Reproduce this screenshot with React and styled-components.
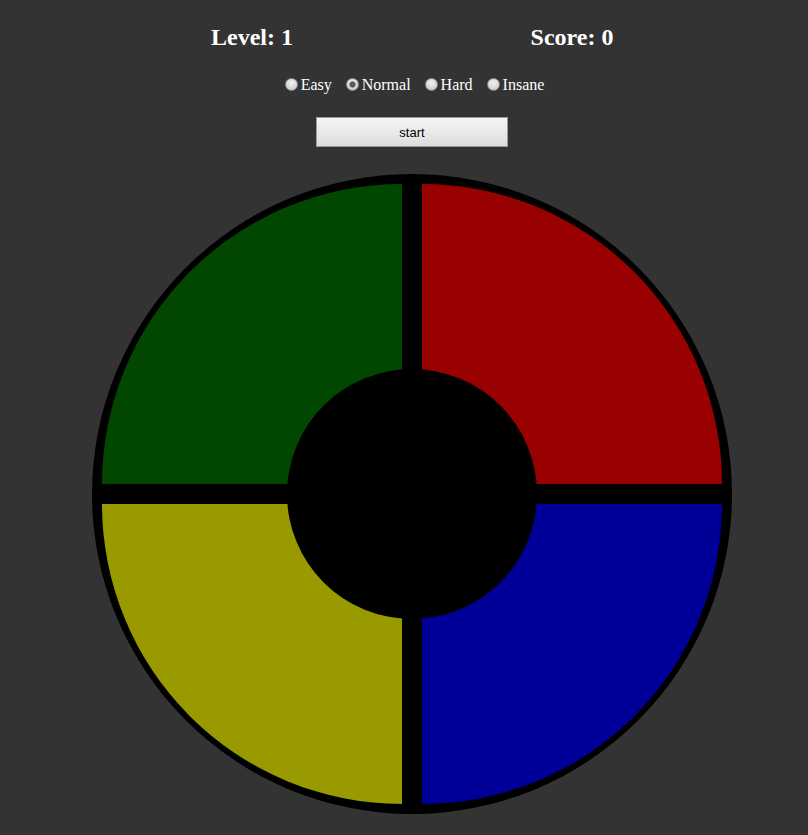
import React, { useState } from 'react'
import styled, { createGlobalStyle } from 'styled-components'

const GlobalStyle = createGlobalStyle`
    html, body {
        margin: 0;
        background: #333333;
    }
    body {
        padding: 0 0 0 16px;
        font-family: "Liberation Serif", "Times New Roman", serif;
        color: #ffffff;
    }
`

const levels = ['Easy', 'Normal', 'Hard', 'Insane']

function App() {
    const [level, setLevel] = useState('Normal')

    return (
        <>
            <GlobalStyle />
            <GameStyled>
                <div className="scores">
                    <h2>Level: 1</h2>
                    <h2>Score: 0</h2>
                </div>
                <div className="levels">
                    {levels.map(name => (
                        <label key={name}>
                            <input
                                type="radio"
                                name="level"
                                checked={level === name}
                                onChange={() => setLevel(name)}
                            />
                            {name}
                        </label>
                    ))}
                </div>
                <StartButton>start</StartButton>
                <Board>
                    <Pad $color="#024700" $corner="top-left" />
                    <Pad $color="#990000" $corner="top-right" />
                    <Pad $color="#999900" $corner="bottom-left" />
                    <Pad $color="#000099" $corner="bottom-right" />
                    <Hub />
                </Board>
            </GameStyled>
        </>
    )
}

const GameStyled = styled.div`
    width: 640px;
    margin: 0 auto;
    padding-top: 23px;
    display: flex;
    flex-direction: column;
    align-items: center;
    .scores{
        width: 100%;
        display: grid;
        grid-template-columns: 1fr 1fr;
        h2{
            margin: 0;
            font-size: 24px;
            line-height: 28px;
            font-weight: 700;
            text-align: center;
        }
    }
    .levels{
        margin-top: 24px;
        display: flex;
        justify-content: center;
        gap: 14px;
        font-size: 16px;
        line-height: 20px;
        padding-left: 5px;
        label{
            display: flex;
            align-items: center;
            gap: 3px;
        }
        input{
            appearance: none;
            box-sizing: border-box;
            margin: 0;
            width: 13px;
            height: 13px;
            border-radius: 50%;
            border: 1px solid #8e8e8e;
            background: radial-gradient(circle at 50% 35%, #f2f2f2 0%, #d6d6d6 60%, #bdbdbd 100%);
            position: relative;
            top: -1px;
        }
        input:checked{
            background:
                radial-gradient(circle, #5a5a5a 0 2.5px, #8a8a8a 3px, transparent 3.5px),
                radial-gradient(circle at 50% 35%, #f2f2f2 0%, #d6d6d6 60%, #bdbdbd 100%);
        }
    }
`

const StartButton = styled.button`
    margin-top: 22px;
    width: 192px;
    height: 30px;
    border: 1px solid #9a9a9a;
    border-radius: 0;
    background: linear-gradient(#f6f6f6, #dddddd);
    font-family: "Liberation Sans", Arial, sans-serif;
    font-size: 13px;
    color: #000;
    cursor: pointer;
`

const Board = styled.div`
    margin-top: 27px;
    width: 620px;
    height: 620px;
    padding: 10px;
    border-radius: 50%;
    background: #000;
    display: grid;
    grid-template-columns: 300px 300px;
    grid-template-rows: 300px 300px;
    gap: 20px;
    position: relative;
`

const radius = {
    'top-left': '300px 0 0 0',
    'top-right': '0 300px 0 0',
    'bottom-left': '0 0 0 300px',
    'bottom-right': '0 0 300px 0',
}

const Pad = styled.div`
    background: ${props => props.$color};
    border-radius: ${props => radius[props.$corner]};
    cursor: pointer;
`

const Hub = styled.div`
    position: absolute;
    left: 50%;
    top: 50%;
    width: 250px;
    height: 250px;
    margin: -125px 0 0 -125px;
    border-radius: 50%;
    background: #000;
`

export default App
